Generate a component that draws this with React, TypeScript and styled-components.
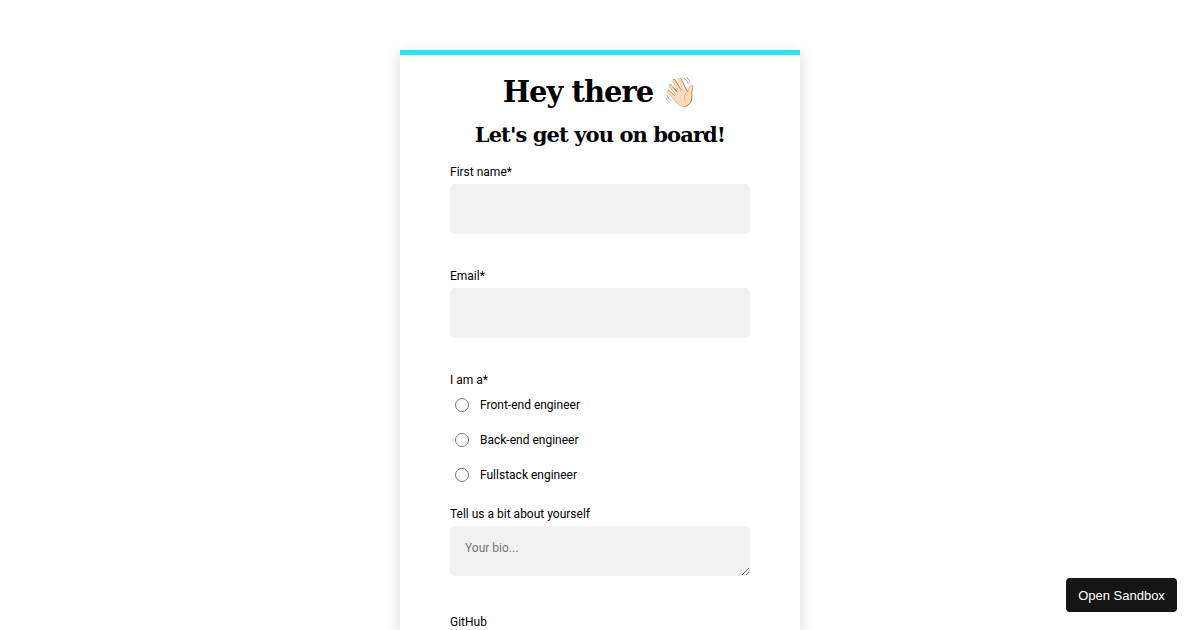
import React from "react";
import styled, { createGlobalStyle } from "styled-components";

const Global = createGlobalStyle`
  html, body { margin: 0; padding: 0; background: #fff; }
  body { font-family: Roboto, "Liberation Sans", sans-serif; color: #000; }
`;

const Page = styled.div`
  display: flex;
  justify-content: center;
  padding-top: 50px;
  height: 580px;
  overflow: hidden;
`;

const Card = styled.form`
  width: 400px;
  box-sizing: border-box;
  border-top: 5px solid #29e3fb;
  box-shadow: 0 4px 14px rgba(0, 0, 0, 0.16);
  padding: 18px 50px 40px;
  display: flex;
  flex-direction: column;
`;

const Title = styled.h1`
  font-family: "DejaVu Serif", "Liberation Serif", serif;
  font-weight: 700;
  font-size: 29px;
  letter-spacing: -1px;
  line-height: 40px;
  margin: -1px 0 0;
  text-align: center;
`;

const Subtitle = styled.h2`
  font-family: "DejaVu Serif", "Liberation Serif", serif;
  font-weight: 700;
  font-size: 21px;
  letter-spacing: -0.9px;
  line-height: 30px;
  margin: 8px 0 15px;
  text-align: center;
`;

const Field = styled.div<{ $gap?: number }>`
  display: flex;
  flex-direction: column;
  margin-bottom: ${(p) => p.$gap ?? 35}px;
`;

const Label = styled.label`
  font-size: 12px;
  line-height: 14px;
  margin-bottom: 5px;
`;

const Input = styled.input`
  height: 50px;
  box-sizing: border-box;
  border: none;
  border-radius: 5px;
  background: #f1f1f1;
  padding: 0 15px;
  font-family: inherit;
  font-size: 13px;
  outline: none;
`;

const TextArea = styled.textarea`
  height: 50px;
  box-sizing: border-box;
  border: none;
  border-radius: 5px;
  background: #f1f1f1;
  padding: 15px;
  font-family: Roboto, sans-serif;
  font-size: 12px;
  outline: none;
  resize: vertical;
  &::placeholder { color: #777; }
`;

const RadioRow = styled.label`
  display: flex;
  align-items: center;
  height: 35px;
  font-size: 12px;
`;

const Radio = styled.input`
  width: 14px;
  height: 14px;
  margin: 0 11px 0 5px;
`;

const RadioGroup = styled.div`
  display: flex;
  flex-direction: column;
  margin-top: -5px;
  margin-bottom: 15px;
`;

const SandboxButton = styled.button`
  position: fixed;
  right: 23px;
  bottom: 18px;
  width: 111px;
  height: 34px;
  background: #151515;
  color: #fff;
  border: none;
  border-radius: 4px;
  font-family: "Liberation Sans", Arial, sans-serif;
  font-size: 13px;
  padding: 0;
`;

export default function App() {
  return (
    <>
      <Global />
      <Page>
        <Card>
          <Title>Hey there 👋🏻</Title>
          <Subtitle>Let's get you on board!</Subtitle>
          <Field>
            <Label>First name*</Label>
            <Input type="text" />
          </Field>
          <Field>
            <Label>Email*</Label>
            <Input type="email" />
          </Field>
          <Field $gap={0}>
            <Label>I am a*</Label>
            <RadioGroup>
              <RadioRow>
                <Radio type="radio" name="role" />
                Front-end engineer
              </RadioRow>
              <RadioRow>
                <Radio type="radio" name="role" />
                Back-end engineer
              </RadioRow>
              <RadioRow>
                <Radio type="radio" name="role" />
                Fullstack engineer
              </RadioRow>
            </RadioGroup>
          </Field>
          <Field $gap={39}>
            <Label>Tell us a bit about yourself</Label>
            <TextArea placeholder="Your bio..." />
          </Field>
          <Field>
            <Label>GitHub</Label>
            <Input type="text" />
          </Field>
        </Card>
      </Page>
      <SandboxButton type="button">Open Sandbox</SandboxButton>
    </>
  );
}
